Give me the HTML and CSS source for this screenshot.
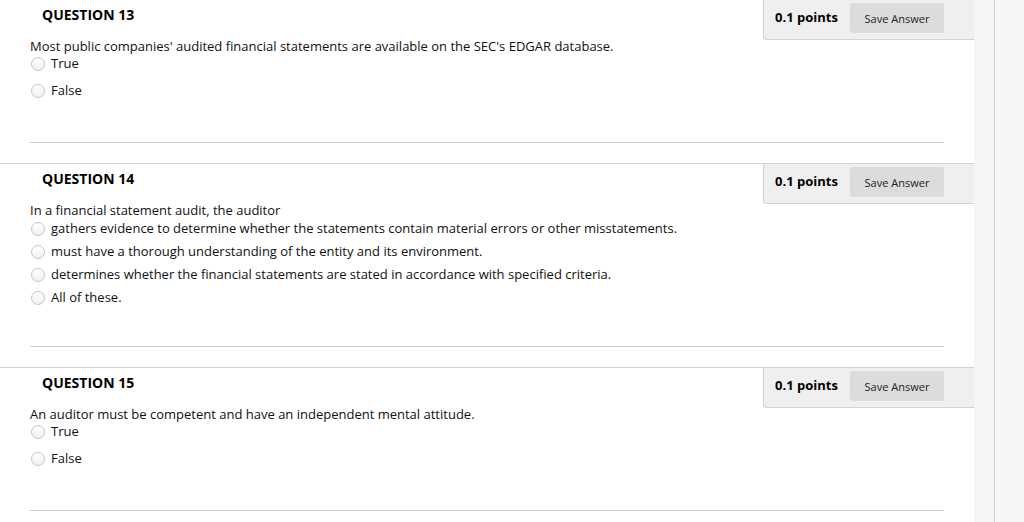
FILE: index.html
```html
<!DOCTYPE html>
<html>
<head>
<meta charset="utf-8">
<link rel="stylesheet" href="styles.css">
</head>
<body>
<div class="page">
  <main class="main">
    <section class="question first">
      <div class="q-head">
        <h2 class="q-title">QUESTION 13</h2>
        <div class="points-box">
          <span class="points">0.1 points</span>
          <button class="save">Save Answer</button>
        </div>
      </div>
      <p class="q-text">Most public companies' audited financial statements are available on the SEC's EDGAR database.</p>
      <ul class="options tf">
        <li class="option"><span class="radio"></span><span class="label">True</span></li>
        <li class="option"><span class="radio"></span><span class="label">False</span></li>
      </ul>
      <hr class="sep">
    </section>

    <section class="question">
      <div class="q-head">
        <h2 class="q-title">QUESTION 14</h2>
        <div class="points-box">
          <span class="points">0.1 points</span>
          <button class="save">Save Answer</button>
        </div>
      </div>
      <p class="q-text">In a financial statement audit, the auditor</p>
      <ul class="options mc">
        <li class="option"><span class="radio"></span><span class="label">gathers evidence to determine whether the statements contain material errors or other misstatements.</span></li>
        <li class="option"><span class="radio"></span><span class="label">must have a thorough understanding of the entity and its environment.</span></li>
        <li class="option"><span class="radio"></span><span class="label">determines whether the financial statements are stated in accordance with specified criteria.</span></li>
        <li class="option"><span class="radio"></span><span class="label">All of these.</span></li>
      </ul>
      <hr class="sep">
    </section>

    <section class="question">
      <div class="q-head">
        <h2 class="q-title">QUESTION 15</h2>
        <div class="points-box">
          <span class="points">0.1 points</span>
          <button class="save">Save Answer</button>
        </div>
      </div>
      <p class="q-text">An auditor must be competent and have an independent mental attitude.</p>
      <ul class="options tf">
        <li class="option"><span class="radio"></span><span class="label">True</span></li>
        <li class="option"><span class="radio"></span><span class="label">False</span></li>
      </ul>
      <hr class="sep">
    </section>
  </main>
  <aside class="sidebar"><div class="sidebar-inner"></div></aside>
</div>
</body>
</html>
```
FILE: styles.css
```css
* { box-sizing: border-box; }
html, body {
  margin: 0;
  padding: 0;
  background: #ffffff;
  font-family: "Open Sans", "Liberation Sans", sans-serif;
  color: #111111;
  height: 100%;
  overflow: hidden;
}
.page {
  display: flex;
  height: 522px;
}
.main {
  width: 974px;
  flex: 0 0 974px;
  background: #ffffff;
}
.sidebar {
  flex: 1;
  background: #f6f6f6;
  padding-left: 20px;
}
.sidebar-inner {
  height: 100%;
  border-left: 1px solid #cfcfcf;
}
.question {
  border-top: 1px solid #d2d2d2;
  margin-bottom: 20px;
}
.question.first {
  margin-top: -1px;
}
.q-head {
  display: flex;
  justify-content: space-between;
  align-items: flex-start;
}
.q-title {
  margin: 0;
  padding: 5px 0 0 42px;
  font-size: 14px;
  line-height: 20px;
  font-weight: 700;
  color: #000;
}
.points-box {
  width: 211px;
  height: 40px;
  background: #efefef;
  border-left: 1px solid #d2d2d2;
  border-bottom: 1px solid #d2d2d2;
  border-bottom-left-radius: 4px;
  display: flex;
  align-items: center;
  padding: 0 0 5px 11px;
}
.points {
  font-size: 13px;
  font-weight: 700;
  color: #000;
  width: 75px;
}
.save {
  font-family: "Open Sans", "Liberation Sans", sans-serif;
  font-size: 11px;
  color: #222;
  background: #dcdcdc;
  border: 0;
  border-radius: 2px;
  width: 94px;
  height: 30px;
  padding: 0;
  margin-top: 2px;
}
.q-text {
  margin: -3px 0 0 30px;
  font-size: 13px;
  line-height: 18px;
}
.options {
  list-style: none;
  margin: 0 0 0 31px;
  padding: 0;
  display: flex;
  flex-direction: column;
  font-size: 13px;
  line-height: 18px;
}
.options.tf { gap: 9px; padding-bottom: 43px; margin-top: -1px; }
.options.mc { gap: 5px; padding-bottom: 40px; }
.option {
  display: flex;
  align-items: center;
  height: 18px;
}
.radio {
  width: 14px;
  height: 14px;
  border-radius: 50%;
  border: 1px solid #c4c4c4;
  background: linear-gradient(#ffffff, #f1f1f1);
  margin-right: 6px;
  margin-top: 2px;
  flex: 0 0 14px;
}
.sep {
  margin: 0 30px;
  border: 0;
  border-top: 1px solid #cfcfcf;
  height: 0;
}
```
